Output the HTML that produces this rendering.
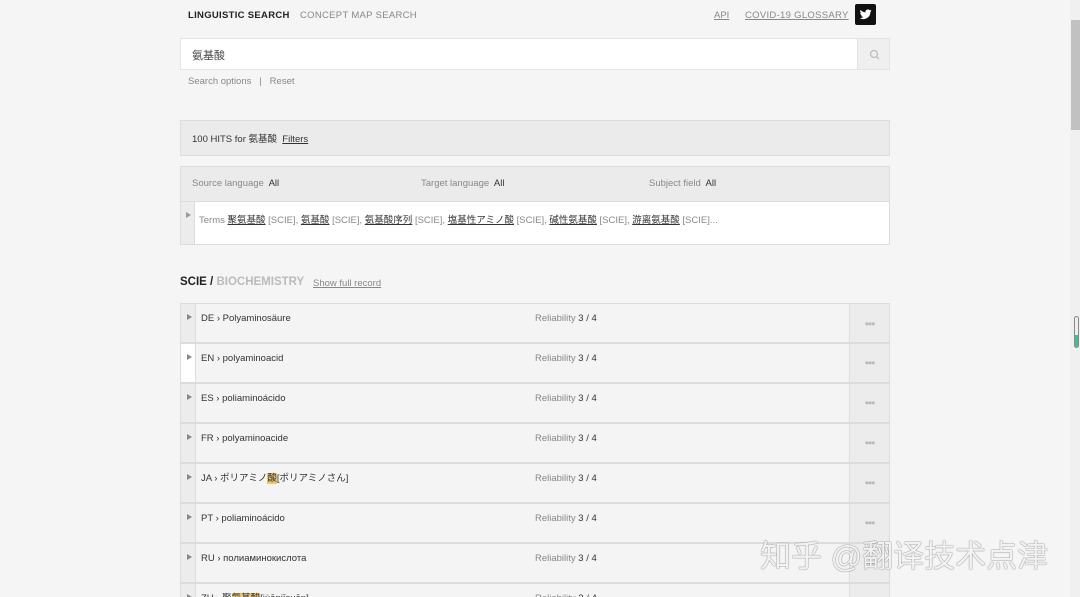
<!DOCTYPE html>
<html style="overflow:hidden;height:597px"><head><meta charset="utf-8"><style>
*{margin:0;padding:0;box-sizing:border-box}
body{width:1080px;height:597px;overflow:hidden;background:#f5f5f5;font-family:"Liberation Sans","Noto Sans CJK SC",sans-serif;color:#333;position:relative;font-size:10px}
.a{position:absolute}
u{text-decoration:underline}
.g{color:#888}
.row{position:absolute;left:180px;width:710px;height:40px;border:1px solid #dcdcdc;background:#f4f4f4}
.row .l{position:absolute;left:0;top:0;width:15px;height:38px;background:#ececec;border-right:1px solid #ddd}
.row .l:after{content:"";position:absolute;left:6px;top:10px;border-left:5px solid #888;border-top:3px solid transparent;border-bottom:3px solid transparent}
.row .t{position:absolute;left:20px;top:9px;font-size:9.5px;line-height:12px;color:#333;white-space:nowrap}
.row .r{position:absolute;left:354px;top:9px;font-size:9.5px;line-height:12px}
.row .d{position:absolute;right:0;top:0;width:40px;height:38px;background:#ececec;border-left:1px solid #ddd;color:#bbb;text-align:center;line-height:38px;font-size:12px;letter-spacing:-1px}
mark{background:#e8c770;color:#333}
</style></head><body>
<div class="a" style="left:188px;top:10px;font-size:9.5px;font-weight:bold;letter-spacing:.3px;color:#222">LINGUISTIC SEARCH</div>
<div class="a" style="left:300px;top:10px;font-size:9.5px;letter-spacing:.3px;color:#888">CONCEPT MAP SEARCH</div>
<div class="a" style="left:714px;top:10px;font-size:9.5px;color:#888"><u>API</u></div>
<div class="a" style="left:745px;top:10px;font-size:9.5px;letter-spacing:.3px;color:#888"><u>COVID-19 GLOSSARY</u></div>
<div class="a" style="left:855px;top:4px;width:21px;height:21px;background:#111;border-radius:2px"><svg width="21" height="21" viewBox="0 0 24 24"><path fill="#fff" d="M19 7.5c-.5.2-1 .4-1.6.4.6-.3 1-.9 1.2-1.5-.5.3-1.1.5-1.8.7a2.8 2.8 0 0 0-4.8 2.5A8 8 0 0 1 6.3 6.7a2.8 2.8 0 0 0 .9 3.7c-.5 0-.9-.1-1.300-.3 0 1.4 1 2.5 2.3 2.8-.4.1-.9.1-1.300 0 .4 1.1 1.4 1.900 2.600 2A5.6 5.6 0 0 1 5.3 16a8 8 0 0 0 12.3-7.1c.6-.4 1-.9 1.4-1.4z"/></svg></div>
<div class="a" style="left:180px;top:38px;width:710px;height:32px;background:#fff;border:1px solid #e3e3e3"></div>
<div class="a" style="left:192px;top:47px;font-size:11px;color:#444">氨基酸</div>
<div class="a" style="left:857px;top:38px;width:33px;height:32px;background:#efefef;border:1px solid #e3e3e3"><svg width="33" height="32"><circle cx="16" cy="15" r="3.5" fill="none" stroke="#bbb" stroke-width="1.2"/><path d="M18.5 17.5l2.5 2.5" stroke="#bbb" stroke-width="1.2"/></svg></div>
<div class="a g" style="left:188px;top:76px;font-size:9.5px">Search options &nbsp; | &nbsp; Reset</div>
<div class="a" style="left:180px;top:120px;width:710px;height:36px;background:#ebebeb;border:1px solid #dcdcdc"></div>
<div class="a" style="left:192px;top:131px;font-size:9.5px">100 HITS for 氨基酸 &nbsp;<u>Filters</u></div>
<div class="a" style="left:180px;top:166px;width:710px;height:79px;background:#fff;border:1px solid #dcdcdc"></div>
<div class="a" style="left:181px;top:167px;width:708px;height:35px;background:#ebebeb;border-bottom:1px solid #ddd"></div>
<div class="a" style="left:181px;top:202px;width:14px;height:42px;background:#ececec;border-right:1px solid #ddd"></div>
<div class="a" style="left:186px;top:212px;border-left:5px solid #999;border-top:3px solid transparent;border-bottom:3px solid transparent"></div>
<div class="a" style="left:192px;top:178px;font-size:9.5px"><span class="g">Source language</span>&nbsp; All</div>
<div class="a" style="left:421px;top:178px;font-size:9.5px"><span class="g">Target language</span>&nbsp; All</div>
<div class="a" style="left:649px;top:178px;font-size:9.5px"><span class="g">Subject field</span>&nbsp; All</div>
<div class="a" style="left:199px;top:212px;font-size:9.5px;white-space:nowrap"><span class="g">Terms</span> <u>聚氨基酸</u> <span class="g">[SCIE],</span> <u>氨基酸</u> <span class="g">[SCIE],</span> <u>氨基酸序列</u> <span class="g">[SCIE],</span> <u>塩基性アミノ酸</u> <span class="g">[SCIE],</span> <u>碱性氨基酸</u> <span class="g">[SCIE],</span> <u>游离氨基酸</u> <span class="g">[SCIE]...</span></div>
<div class="a" style="left:180px;top:276px;font-size:11.5px;font-weight:bold;color:#222">SCIE / <span style="color:#bbb">BIOCHEMISTRY</span></div>
<div class="a g" style="left:313px;top:278px;font-size:9.5px"><u>Show full record</u></div>
<div class="row" style="top:303px"><div class="l"></div><div class="t">DE › Polyaminosäure</div><div class="r"><span class="g">Reliability</span> 3 / 4</div><div class="d" style="line-height:40px">•••</div></div>
<div class="row" style="top:343px"><div class="l" style="background:#fff"></div><div class="t">EN › polyaminoacid</div><div class="r"><span class="g">Reliability</span> 3 / 4</div><div class="d">•••</div></div>
<div class="row" style="top:383px"><div class="l"></div><div class="t">ES › poliaminoácido</div><div class="r"><span class="g">Reliability</span> 3 / 4</div><div class="d">•••</div></div>
<div class="row" style="top:423px"><div class="l"></div><div class="t">FR › polyaminoacide</div><div class="r"><span class="g">Reliability</span> 3 / 4</div><div class="d">•••</div></div>
<div class="row" style="top:463px"><div class="l"></div><div class="t">JA › ポリアミノ<mark>酸</mark>[ポリアミノさん]</div><div class="r"><span class="g">Reliability</span> 3 / 4</div><div class="d">•••</div></div>
<div class="row" style="top:503px"><div class="l"></div><div class="t">PT › poliaminoácido</div><div class="r"><span class="g">Reliability</span> 3 / 4</div><div class="d">•••</div></div>
<div class="row" style="top:543px"><div class="l"></div><div class="t">RU › полиаминокислота</div><div class="r"><span class="g">Reliability</span> 3 / 4</div><div class="d">•••</div></div>
<div class="row" style="top:583px;height:14px;border-bottom:none;overflow:hidden"><div class="l"></div><div class="t">ZH › 聚<mark>氨基酸</mark>[jùānjīsuān]</div><div class="r"><span class="g">Reliability</span> 3 / 4</div><div class="d">•••</div></div>
<div class="a" style="left:760px;top:531px;font-size:31px;color:rgba(255,255,255,.9);text-shadow:0 0 1px #777,0 0 1px #777;white-space:nowrap">知乎 @翻译技术点津</div>
<div class="a" style="left:1070px;top:0;width:10px;height:597px;background:#f0f0f0"></div>
<div class="a" style="left:1071px;top:20px;width:9px;height:110px;background:#c1c1c1"></div>
<div class="a" style="left:1074px;top:316px;width:5px;height:32px;border:1px solid #888;border-radius:3px;background:#eee"></div>
<div class="a" style="left:1075px;top:335px;width:3px;height:12px;background:#4b9"></div>
</body></html>
